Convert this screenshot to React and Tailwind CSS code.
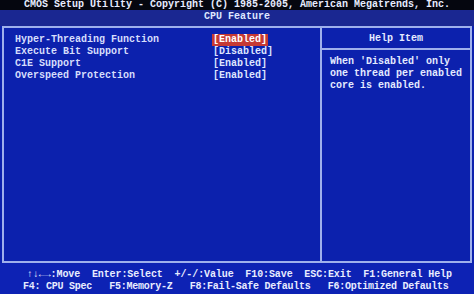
import React from 'react';

const items = [
  { label: 'Hyper-Threading Function', value: '[Enabled]', active: true },
  { label: 'Execute Bit Support', value: '[Disabled]' },
  { label: 'C1E Support', value: '[Enabled]' },
  { label: 'Overspeed Protection', value: '[Enabled]' },
];

const App = () => {
  return (
    <div
      className="w-[474px] h-[294px] overflow-hidden bg-[#0c21ad] text-[10px] font-bold flex flex-col"
      style={{ fontFamily: '"Liberation Mono", "DejaVu Sans Mono", monospace' }}
    >
      <div className="h-[10px] bg-[#05060f] text-[#e8ecff] leading-[10px] text-center whitespace-pre overflow-hidden">
        CMOS Setup Utility - Copyright (C) 1985-2005, American Megatrends, Inc.
      </div>
      <div className="h-[16px] bg-[#1a2791] text-[#dfe6ff] leading-[14px] text-center">
        CPU Feature
      </div>
      <div className="mx-[2px] h-[237px] border-2 border-[#9fb0ec] flex">
        <div className="w-[318px] border-r-2 border-[#9fb0ec] pt-[6px] pl-[11px]">
          {items.map((it) => (
            <div key={it.label} className="flex h-[12px] leading-[12px] whitespace-pre">
              <span className="w-[198px] text-[#d6defc]">{it.label}</span>
              <span
                className={
                  it.active
                    ? 'bg-[#c63a34] text-white px-[1px] -ml-[1px]'
                    : 'text-[#dfe6ff]'
                }
              >
                {it.value}
              </span>
            </div>
          ))}
        </div>
        <div className="flex-1 flex flex-col">
          <div className="h-[22px] border-b-2 border-[#9fb0ec] text-center leading-[22px] text-[#e4eaff]">
            Help Item
          </div>
          <div className="pt-[6px] pl-[8px] leading-[12px] text-[#e4eaff] whitespace-pre">
            <div>When 'Disabled' only</div>
            <div>one thread per enabled</div>
            <div>core is enabled.</div>
          </div>
        </div>
      </div>
      <div className="flex-1 bg-[#0d22b4] text-[#e8ecff] pt-[6px] leading-[12px] whitespace-pre">
        <div className="pl-[27px] tracking-[-0.1px]">↑↓←→:Move  Enter:Select  +/-/:Value  F10:Save  ESC:Exit  F1:General Help</div>
        <div className="pl-[23px] tracking-[-0.25px]">F4: CPU Spec   F5:Memory-Z   F8:Fail-Safe Defaults   F6:Optimized Defaults</div>
      </div>
    </div>
  );
};

export default App;
